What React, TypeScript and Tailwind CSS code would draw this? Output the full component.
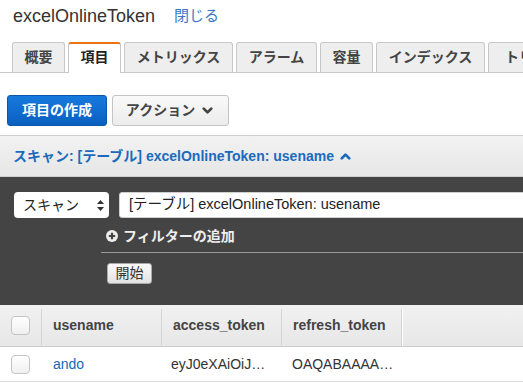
import { ChevronDown, ChevronUp } from "lucide-react";

const tabs = [
  { label: "概要", w: "w-[53px]" },
  { label: "項目", w: "w-[53px]", active: true },
  { label: "メトリックス", w: "w-[109px]" },
  { label: "アラーム", w: "w-[81px]" },
  { label: "容量", w: "w-[53px]" },
  { label: "インデックス", w: "w-[109px]" },
  { label: "トリガー", w: "w-[90px]" },
];

const columns = [
  { key: "usename", label: "usename" },
  { key: "access_token", label: "access_token" },
  { key: "refresh_token", label: "refresh_token" },
];

function Checkbox() {
  return (
    <span className="block h-[19px] w-[19px] rounded-[4px] border border-[#c4c4c4] bg-[linear-gradient(#ffffff,#f0f0f0)]" />
  );
}

function SelectArrows() {
  return (
    <svg width="7" height="11" viewBox="0 0 7 11" aria-hidden>
      <path d="M3.5 0 L7 4 L0 4 Z" fill="#333" />
      <path d="M3.5 11 L7 7 L0 7 Z" fill="#333" />
    </svg>
  );
}

function PlusCircle() {
  return (
    <svg width="12" height="12" viewBox="0 0 12 12" aria-hidden>
      <circle cx="6" cy="6" r="6" fill="#eeeeee" />
      <path d="M6 2.8 V9.2 M2.8 6 H9.2" stroke="#444" strokeWidth="2.2" />
    </svg>
  );
}

export default function App() {
  return (
    <div className="h-[385px] w-[523px] overflow-hidden bg-white font-['Liberation_Sans','Noto_Sans_CJK_JP',sans-serif] text-[#333]">
      <div className="flex h-[33px] items-center gap-[19px] px-[13px]">
        <span className="text-[18px] text-[#333]">excelOnlineToken</span>
        <span className="text-[15px] text-[#3b78c4]">閉じる</span>
      </div>

      <div className="mt-[9px] flex gap-[3px] border-b border-[#c8c8c8] pl-[12px]">
        {tabs.map((tab) => (
          <div
            key={tab.label}
            className={
              tab.active
                ? `${tab.w} -mb-px flex h-[31px] shrink-0 items-center justify-center rounded-t-[3px] border border-b-0 border-[#c8c8c8] border-t-2 border-t-[#ec7211] bg-white pb-[2px] text-[14px] font-bold text-[#222]`
                : `${tab.w} flex h-[30px] shrink-0 items-center justify-center rounded-t-[3px] border border-b-0 border-[#c8c8c8] bg-[#eeeeee] text-[14px] font-bold text-[#444]`
            }
          >
            {tab.label}
          </div>
        ))}
      </div>

      <div className="mt-[22px] flex gap-[5px] px-[7px]">
        <button className="flex h-[31px] w-[100px] items-center justify-center rounded-[3px] border border-[#0b57a8] bg-[linear-gradient(#1779dd,#0a60c0)] text-[14px] font-bold text-white">
          項目の作成
        </button>
        <button className="flex h-[31px] w-[117px] items-center justify-center gap-[5px] rounded-[3px] border border-[#c4c4c4] bg-[linear-gradient(#f9f9f9,#ececec)] text-[14px] font-bold text-[#444]">
          アクション
          <ChevronDown aria-hidden className="h-[15px] w-[15px]" strokeWidth={4.5} />
        </button>
      </div>

      <div className="mt-[9px] flex h-[42px] items-center gap-[4px] border-y border-[#cfcfcf] bg-[linear-gradient(#f2f2f2,#e6e6e6)] px-[13px] text-[14px] font-bold text-[#1a6bbd]">
        <span>スキャン: [テーブル] excelOnlineToken: usename</span>
        <ChevronUp aria-hidden className="h-[15px] w-[15px]" strokeWidth={4.5} />
      </div>

      <div className="h-[128px] bg-[#444444]">
        <div className="flex gap-[10px] pl-[14px] pt-[15px]">
          <div className="flex h-[26px] w-[95px] shrink-0 items-center justify-between rounded-[4px] bg-white pl-[9px] pr-[5px] text-[14px] text-[#222]">
            スキャン
            <SelectArrows />
          </div>
          <div className="flex h-[26px] w-[420px] shrink-0 items-center rounded-[3px] border border-[#d0d0d0] bg-white pl-[9px] text-[14.5px] text-[#222]">
            [テーブル] excelOnlineToken: usename
          </div>
        </div>
        <div className="ml-[101px]">
          <div className="flex h-[35px] items-center gap-[5px] border-b border-[#9a9a9a] pl-[5px] pt-[2px] text-[14px] font-semibold text-[#eeeeee]">
            <PlusCircle />
            フィルターの追加
          </div>
          <button className="ml-[6px] mt-[10px] flex h-[21px] w-[45px] items-center justify-center rounded-[3px] border border-[#aaa] bg-[linear-gradient(#fafafa,#e2e2e2)] text-[14px] text-[#333]">
            開始
          </button>
        </div>
      </div>

      <div className="flex h-[42px] border-b border-[#cccccc] bg-[linear-gradient(#f1f1f1,#e7e7e7)] pt-[4px]">
        <div className="flex w-[41px] shrink-0 items-center pb-[4px] pl-[11px]">
          <Checkbox />
        </div>
        {columns.map((col) => (
          <div
            key={col.key}
            className="flex w-[120px] shrink-0 items-center border-l border-[#d4d4d4] pb-[4px] pl-[11px] text-[14px] font-bold text-[#444]"
          >
            {col.label}
          </div>
        ))}
        <div className="flex-1 border-l border-[#d4d4d4] shadow-[inset_1px_0_0_#ffffff]" />
      </div>

      <div className="flex h-[35px] items-center border-b border-[#dddddd] text-[14px]">
        <div className="flex w-[41px] shrink-0 pl-[11px]">
          <Checkbox />
        </div>
        <div className="w-[120px] shrink-0 pl-[12px] text-[#1669bb]">ando</div>
        <div className="w-[120px] shrink-0 pl-[10px] text-[#333]">eyJ0eXAiOiJ…</div>
        <div className="w-[120px] shrink-0 pl-[11px] text-[#333]">OAQABAAAA…</div>
      </div>
    </div>
  );
}
